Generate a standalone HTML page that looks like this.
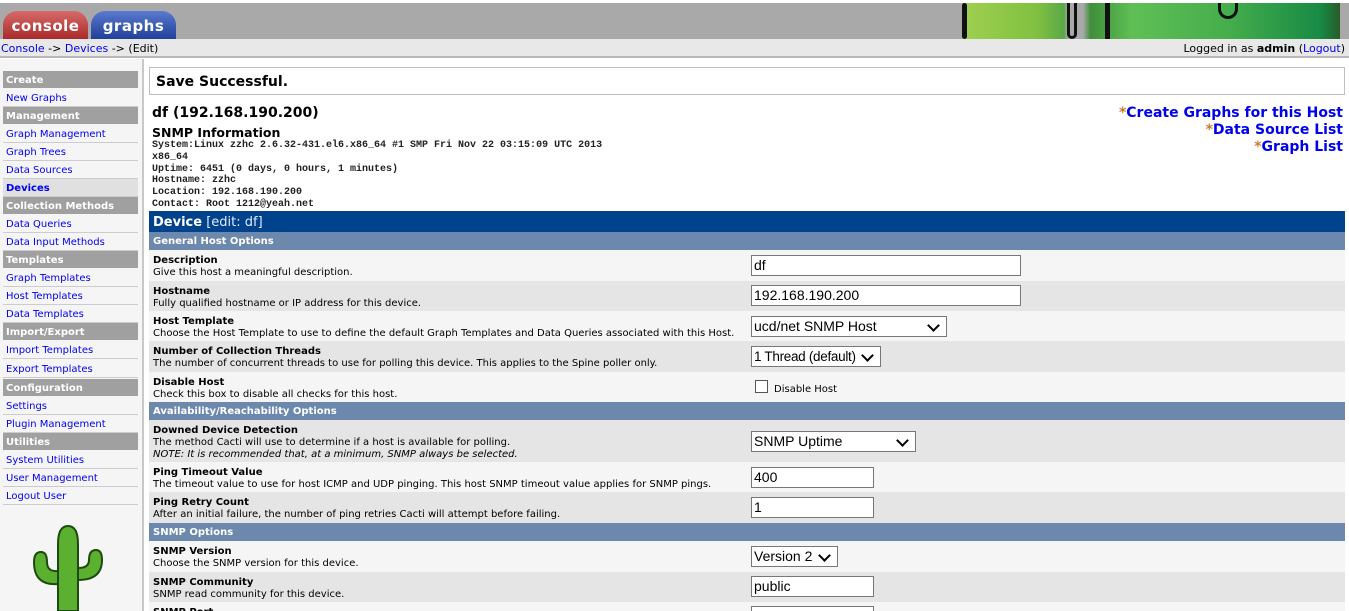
<!DOCTYPE html>
<html><head><meta charset="utf-8"><style>
*{margin:0;padding:0;box-sizing:border-box}
html,body{width:1349px;height:611px;overflow:hidden}
body{background:#fff;font-family:"DejaVu Sans",Verdana,sans-serif;font-size:10px;color:#000;position:relative}
.a{position:absolute}
a{color:#0000ee;text-decoration:none}
.top{left:0;top:3px;width:1349px;height:36px;background:#a9a9a9}
.tab{top:11px;height:28px;border-radius:14px 14px 0 0;color:#fff;font-weight:bold;font-size:15px;text-align:center;line-height:31px;letter-spacing:.5px}
.crumb{left:0;top:39px;width:1349px;height:19px;background:#e8e8e8;border-bottom:2px solid #b8b8b8;font-size:11px;line-height:19px;padding-left:1px}
.side{left:0;top:59px;width:144px;height:552px;background:#f5f5f5;border-right:2px solid #c8c8c8}
.mi{position:absolute;left:3px;width:135px;height:18px;font-size:10px;line-height:20px;padding-left:3px;border-bottom:1px solid #ccc}
.mh{background:#a0a0a0;color:#fff;font-weight:bold;border:none;height:17px}
.row{position:absolute;left:149px;width:1196px;padding:5px 4px 0}
.row b{display:block;font-size:10px;line-height:12px}
.row span{display:block;font-size:10px;line-height:12px}
.hd{background:#6d88ad;color:#fff;font-weight:bold;height:18px;line-height:20px;padding:0 4px}
.inp{position:absolute;height:21px;border:1px solid #777;background:#fff;font-family:"Liberation Sans",Arial,sans-serif;font-size:14px;line-height:19px;padding-left:2px;white-space:nowrap;overflow:hidden}
.sel:after{content:"";position:absolute;right:8px;top:4px;width:7px;height:7px;border-right:2px solid #000;border-bottom:2px solid #000;transform:rotate(45deg)}
.mono{font-family:"Liberation Mono","Courier New",monospace;font-size:10px;line-height:11.8px;font-weight:bold;color:#222}
</style></head><body>
<div class="a top"></div>
<div class="a tab" style="left:3px;width:85px;background:linear-gradient(#d86a6a,#a82a2a)">console</div>
<div class="a tab" style="left:91px;width:85px;background:linear-gradient(#5a7ad0,#20409a)">graphs</div>
<div class="a" style="left:962px;top:3px;width:378px;height:36px;background:linear-gradient(90deg,#a0d050,#80c040 20%,#5aa848 27%,#a9a9a9 28%,#a9a9a9 32%,#3f8f3a 34%,#5fbf55 45%,#46ae4c 70%,#178a45 95%,#2a5a2a)"></div>
<div class="a" style="left:962px;top:3px;width:5px;height:36px;background:#111;border-radius:3px"></div>
<div class="a" style="left:1067px;top:3px;width:10px;height:36px;border:3px solid #111;border-radius:0 0 6px 6px;border-top:none"></div>
<div class="a" style="left:1105px;top:3px;width:5px;height:36px;background:#111"></div>
<div class="a" style="left:1218px;top:3px;width:20px;height:16px;border:3px solid #111;border-top:none;border-radius:0 0 10px 10px"></div>
<div class="a crumb"><a>Console</a> -&gt; <a>Devices</a> -&gt; (Edit)<span style="position:absolute;right:4px">Logged in as <b>admin</b> (<a>Logout</a>)</span></div>
<div class="a side">
<div class="mi mh" style="top:12px">Create</div>
<div class="mi" style="top:30px"><a>New Graphs</a></div>
<div class="mi mh" style="top:48px">Management</div>
<div class="mi" style="top:66px"><a>Graph Management</a></div>
<div class="mi" style="top:84px"><a>Graph Trees</a></div>
<div class="mi" style="top:102px"><a>Data Sources</a></div>
<div class="mi" style="top:120px;background:#e0e0e0;font-weight:bold"><a>Devices</a></div>
<div class="mi mh" style="top:138px">Collection Methods</div>
<div class="mi" style="top:156px"><a>Data Queries</a></div>
<div class="mi" style="top:174px"><a>Data Input Methods</a></div>
<div class="mi mh" style="top:192px">Templates</div>
<div class="mi" style="top:210px"><a>Graph Templates</a></div>
<div class="mi" style="top:228px"><a>Host Templates</a></div>
<div class="mi" style="top:246px"><a>Data Templates</a></div>
<div class="mi mh" style="top:264px">Import/Export</div>
<div class="mi" style="top:282px"><a>Import Templates</a></div>
<div class="mi" style="top:301px"><a>Export Templates</a></div>
<div class="mi mh" style="top:320px">Configuration</div>
<div class="mi" style="top:338px"><a>Settings</a></div>
<div class="mi" style="top:356px"><a>Plugin Management</a></div>
<div class="mi mh" style="top:374px">Utilities</div>
<div class="mi" style="top:392px"><a>System Utilities</a></div>
<div class="mi" style="top:410px"><a>User Management</a></div>
<div class="mi" style="top:428px"><a>Logout User</a></div>
<svg class="a" style="left:30px;top:465px" width="80" height="87" viewBox="0 0 80 87"><g stroke="#1e4a10" stroke-width="2" fill="#5cb030"><path d="M28 87 V20 Q28 2 38 2 Q48 2 48 20 V87Z"/><path d="M28 60 Q4 62 4 38 Q4 28 11 28 Q17 28 17 38 Q17 48 28 47Z"/><path d="M48 56 Q72 56 72 36 Q72 26 66 26 Q59 26 59 36 Q59 44 48 44Z"/></g></svg>
</div>
<div class="a" style="left:149px;top:67px;width:1196px;height:28px;border:1px solid #c0c0c0;font-weight:bold;font-size:14px;line-height:28px;padding-left:6px">Save Successful.</div>
<div class="a" style="left:152px;top:105px;font-weight:bold;font-size:14px">df (192.168.190.200)</div>
<div class="a" style="left:152px;top:125px;font-weight:bold;font-size:12.5px">SNMP Information</div>
<div class="a mono" style="left:152px;top:140px">System:Linux zzhc 2.6.32-431.el6.x86_64 #1 SMP Fri Nov 22 03:15:09 UTC 2013<br>x86_64<br>Uptime: 6451 (0 days, 0 hours, 1 minutes)<br>Hostname: zzhc<br>Location: 192.168.190.200<br>Contact: Root 1212@yeah.net</div>
<div class="a" style="right:6px;top:105px;text-align:right;font-weight:bold;font-size:14px;line-height:17px"><span style="color:#c87a30">*</span><a>Create Graphs for this Host</a><br><span style="color:#c87a30">*</span><a>Data Source List</a><br><span style="color:#c87a30">*</span><a>Graph List</a></div>
<div class="a" style="left:149px;top:211px;width:1196px;height:21px;background:#00438c;color:#fff;font-size:13px;line-height:23px;padding-left:4px"><b>Device</b> <span style="color:#e0e8ff">[edit: df]</span></div>
<div class="row hd" style="top:232px">General Host Options</div>
<div class="row" style="top:250px;height:31px;background:#f5f5f5"><b>Description</b><span>Give this host a meaningful description.</span></div>
<div class="row" style="top:281px;height:30px;background:#e5e5e5"><b>Hostname</b><span>Fully qualified hostname or IP address for this device.</span></div>
<div class="row" style="top:311px;height:30px;background:#f5f5f5"><b>Host Template</b><span>Choose the Host Template to use to define the default Graph Templates and Data Queries associated with this Host.</span></div>
<div class="row" style="top:341px;height:31px;background:#e5e5e5"><b>Number of Collection Threads</b><span>The number of concurrent threads to use for polling this device. This applies to the Spine poller only.</span></div>
<div class="row" style="top:372px;height:30px;background:#f5f5f5"><b>Disable Host</b><span>Check this box to disable all checks for this host.</span></div>
<div class="row hd" style="top:402px">Availability/Reachability Options</div>
<div class="row" style="top:420px;height:42px;background:#e5e5e5"><b>Downed Device Detection</b><span>The method Cacti will use to determine if a host is available for polling.</span><span style="font-style:italic">NOTE: It is recommended that, at a minimum, SNMP always be selected.</span></div>
<div class="row" style="top:462px;height:30px;background:#f5f5f5"><b>Ping Timeout Value</b><span>The timeout value to use for host ICMP and UDP pinging. This host SNMP timeout value applies for SNMP pings.</span></div>
<div class="row" style="top:492px;height:31px;background:#e5e5e5"><b>Ping Retry Count</b><span>After an initial failure, the number of ping retries Cacti will attempt before failing.</span></div>
<div class="row hd" style="top:523px">SNMP Options</div>
<div class="row" style="top:541px;height:31px;background:#f5f5f5"><b>SNMP Version</b><span>Choose the SNMP version for this device.</span></div>
<div class="row" style="top:572px;height:30px;background:#e5e5e5"><b>SNMP Community</b><span>SNMP read community for this device.</span></div>
<div class="row" style="top:602px;height:30px;background:#f5f5f5"><b>SNMP Port</b></div>
<div class="inp" style="left:751px;top:255px;width:270px">df</div>
<div class="inp" style="left:751px;top:285px;width:270px">192.168.190.200</div>
<div class="inp sel" style="left:751px;top:316px;width:196px">ucd/net SNMP Host</div>
<div class="inp sel" style="left:751px;top:346px;width:130px;font-size:13.5px;letter-spacing:-0.3px">1 Thread (default)</div>
<div class="a" style="left:755px;top:380px;width:13px;height:13px;border:1px solid #555;background:#fff"></div>
<div class="a" style="left:774px;top:384px">Disable Host</div>
<div class="inp sel" style="left:751px;top:431px;width:165px">SNMP Uptime</div>
<div class="inp" style="left:751px;top:467px;width:123px">400</div>
<div class="inp" style="left:751px;top:497px;width:123px">1</div>
<div class="inp sel" style="left:751px;top:546px;width:87px">Version 2</div>
<div class="inp" style="left:751px;top:576px;width:123px">public</div>
<div class="inp" style="left:751px;top:606px;width:123px"></div>
</body></html>
